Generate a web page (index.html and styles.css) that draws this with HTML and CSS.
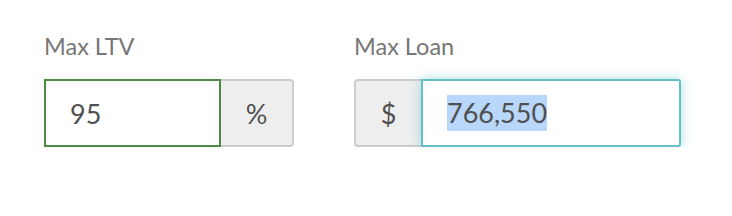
FILE: index.html
```html
<!DOCTYPE html>
<html lang="en">
  <head>
    <meta charset="UTF-8" />
    <meta name="viewport" content="width=device-width, initial-scale=1.0" />
    <title>Loan Limits</title>
    <link rel="stylesheet" href="styles.css">
  </head>
  <body>
    <div class="limits">
      <div class="field field-ltv">
        <label class="field-label">Max LTV</label>
        <div class="input-group">
          <div class="input input-ok">95</div>
          <div class="addon addon-right">%</div>
        </div>
      </div>

      <div class="field field-loan">
        <label class="field-label">Max Loan</label>
        <div class="input-group">
          <div class="addon addon-left">$</div>
          <div class="input input-focus"><span class="selected">766,550</span></div>
        </div>
      </div>
    </div>
  </body>
</html>
```

FILE: styles.css
```css
body {
  font-family: Lato, "Open Sans", Arial, sans-serif;
  margin: 0;
  background: #ffffff;
}

.limits {
  display: flex;
  gap: 60px;
  padding: 32px 0 0 44px;
}

.field-label {
  display: block;
  font-size: 23.5px;
  color: #777777;
  line-height: 28px;
  margin-bottom: 19px;
}

.input-group {
  display: flex;
  height: 68px;
}

.field-ltv .input {
  width: 177px;
}

.field-loan .input {
  width: 260px;
}

.input {
  box-sizing: border-box;
  display: flex;
  align-items: center;
  padding-left: 24px;
  font-size: 27px;
  color: #505050;
  background: #ffffff;
  border: 2px solid #cccccc;
}

.input-ok {
  border-color: #4e8a46;
}

.input-focus {
  border-color: #63c0c6;
  border-radius: 0 3px 3px 0;
  box-shadow: 0 0 12px rgba(99, 192, 198, 0.55);
}

.selected {
  background: #b9d6fb;
  line-height: 36px;
}

.addon {
  box-sizing: border-box;
  display: flex;
  align-items: center;
  justify-content: center;
  font-size: 27px;
  color: #505050;
  background: #eeeeee;
  border: 2px solid #cccccc;
}

.addon-right {
  width: 73px;
  border-left: none;
  border-radius: 0 4px 4px 0;
}

.addon-left {
  width: 67px;
  border-right: none;
  border-radius: 4px 0 0 4px;
}
```
